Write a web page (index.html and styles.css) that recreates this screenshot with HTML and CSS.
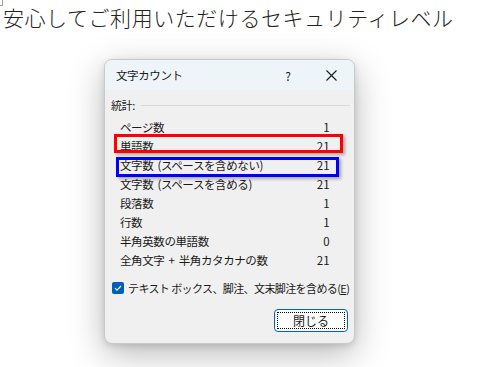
FILE: index.html
```
<!DOCTYPE html>
<html lang="ja">
  <head>
    <meta charset="UTF-8" />
    <meta name="viewport" content="width=device-width, initial-scale=1.0" />
    <title>文字カウント</title>
    <link rel="stylesheet" href="styles.css">
  </head>
  <body>
    <div class="page">
      <span class="corner-mark"></span>
      <h1 class="doc-text">安心してご利用いただけるセキュリティレベル</h1>

      <div class="dialog">
        <div class="title-bar">
          <span class="title">文字カウント</span>
          <span class="help">?</span>
          <span class="close">
            <svg width="11" height="11" viewBox="0 0 11 11">
              <path d="M0.5 0.5 L10.5 10.5 M10.5 0.5 L0.5 10.5" stroke="#1a1a1a" stroke-width="1.1" fill="none" />
            </svg>
          </span>
        </div>

        <div class="dialog-body">
          <div class="group-label">
            <span>統計:</span>
            <span class="group-line"></span>
          </div>

          <ul class="stats">
            <li><span>ページ数</span><span>1</span></li>
            <li><span>単語数</span><span>21</span></li>
            <li><span>文字数 (スペースを含めない)</span><span>21</span></li>
            <li><span>文字数 (スペースを含める)</span><span>21</span></li>
            <li><span>段落数</span><span>1</span></li>
            <li><span>行数</span><span>1</span></li>
            <li><span>半角英数の単語数</span><span>0</span></li>
            <li><span>全角文字 + 半角カタカナの数</span><span>21</span></li>
          </ul>

          <label class="check-row">
            <span class="checkbox">
              <svg width="12" height="12" viewBox="0 0 12 12">
                <path d="M3 6.2 L5 8.2 L9 4" stroke="#ffffff" stroke-width="1.1" fill="none" />
              </svg>
            </span>
            <span>テキスト ボックス、脚注、文末脚注を含める(<u>E</u>)</span>
          </label>

          <div class="actions">
            <button class="close-btn"><span>閉じる</span></button>
          </div>
        </div>

        <!-- annotation boxes drawn over the dialog -->
        <div class="mark mark-red"></div>
        <div class="mark mark-blue"></div>
      </div>
    </div>
  </body>
</html>
```

FILE: styles.css
```
:root {
  --dialog-bg: #f0f0f0;
  --title-bg: #eef5f8;
  --text: #1a1a1a;
  --accent: #005fb8;
  --line: #d9d9d9;
}

* {
  margin: 0;
  padding: 0;
  box-sizing: border-box;
}

body {
  background: #ffffff;
  color: var(--text);
  font-family: "Noto Sans CJK JP", "Noto Sans", sans-serif;
  width: 502px;
  height: 367px;
  overflow: hidden;
}

.page {
  position: relative;
  padding-top: 2px;
}

.corner-mark {
  position: absolute;
  left: 0;
  top: 0;
  width: 3px;
  height: 6px;
  border-right: 1px solid #a0a0a0;
  border-bottom: 1px solid #a0a0a0;
}

.doc-text {
  font-family: "Noto Sans CJK JP", serif;
  font-weight: 300;
  font-size: 21px;
  letter-spacing: 0.55px;
  line-height: 31px;
  padding-left: 3px;
  color: #222;
}

.dialog {
  position: relative;
  margin: 26px 0 0 104px;
  width: 251px;
  height: 285px;
  background: var(--dialog-bg);
  border: 1px solid #c9c9c9;
  border-radius: 8px;
  box-shadow: 0 10px 34px rgba(0, 0, 0, 0.28), 0 2px 6px rgba(0, 0, 0, 0.12);
  font-size: 11px;
  letter-spacing: -0.4px;
  white-space: nowrap;
  overflow: hidden;
}

.title-bar {
  height: 30px;
  background: var(--title-bg);
  display: flex;
  align-items: center;
  padding-left: 11px;
}

.title {
  flex: 1;
  font-size: 11.5px;
}

.help {
  width: 20px;
  text-align: center;
  margin-right: 28px;
  font-size: 12px;
}

.close {
  display: flex;
  margin-right: 17px;
}

.dialog-body {
  padding: 5px 0 0 0;
}

.group-label {
  display: flex;
  align-items: center;
  gap: 6px;
  padding: 0 4px 0 6px;
  height: 20px;
}

.group-line {
  flex: 1;
  height: 1px;
  background: var(--line);
}

.stats {
  list-style: none;
  padding: 2px 24px 0 15px;
}

.stats li {
  display: flex;
  justify-content: space-between;
  align-items: center;
  height: 19px;
  font-size: 11.5px;
  word-spacing: 2px;
}

.stats li span:last-child {
  letter-spacing: 0.3px;
}

.check-row {
  display: flex;
  align-items: center;
  gap: 4px;
  margin: 12px 0 0 7px;
  height: 14px;
  letter-spacing: -0.6px;
}

.checkbox {
  width: 12px;
  height: 12px;
  border-radius: 2px;
  background: var(--accent);
  display: flex;
  flex-shrink: 0;
}

.check-row u {
  text-underline-offset: 1px;
}

.actions {
  display: flex;
  justify-content: flex-end;
  padding: 14px 6px 0 0;
}

.close-btn {
  width: 74px;
  height: 23px;
  padding: 2px;
  background: #fdfdfd;
  border: 1px solid #0067c0;
  border-radius: 4px;
  font-family: inherit;
  font-size: 12px;
  color: var(--text);
}

.close-btn span {
  display: flex;
  align-items: center;
  justify-content: center;
  height: 100%;
  border: 1px dotted #000;
}

.mark {
  position: absolute;
  border: 3px solid;
  box-shadow: 2px 2px 3px rgba(0, 0, 0, 0.3);
}

.mark-red {
  left: 9px;
  top: 74px;
  width: 229px;
  height: 19px;
  border-color: #ff0000;
}

.mark-blue {
  left: 11px;
  top: 97px;
  width: 223px;
  height: 20px;
  border-color: #0000ff;
}
```
